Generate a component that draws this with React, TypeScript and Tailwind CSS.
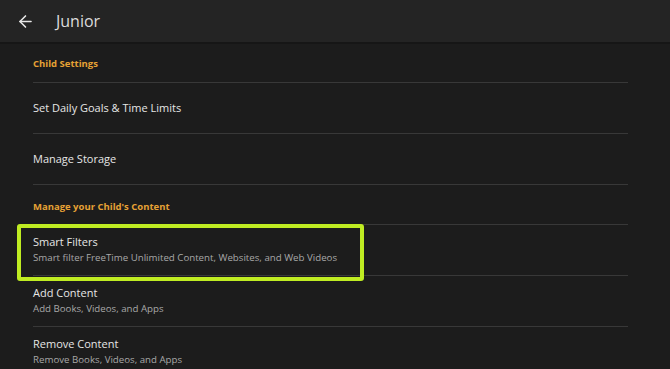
import { ArrowLeft } from 'lucide-react';

const font = { fontFamily: '"Open Sans", "Liberation Sans", sans-serif' };

const Divider = () => <div className="h-px bg-[#383838]" />;

const SectionHeader = ({ title, className }: { title: string; className: string }) => (
  <div className={`flex items-center text-[9.5px] font-bold text-[#e6a235] ${className}`}>{title}</div>
);

const Row = ({ title }: { title: string }) => (
  <div className="flex h-[50px] items-center text-[11px] text-[#e6e6e6]">{title}</div>
);

const SubRow = ({ title, sub }: { title: string; sub: string }) => (
  <div className="flex h-[50px] flex-col justify-center pb-[2px]">
    <div className="text-[11px] leading-[16px] text-[#e6e6e6]">{title}</div>
    <div className="text-[9.7px] leading-[15px] text-[#a8a8a8]">{sub}</div>
  </div>
);

export default function App() {
  return (
    <div className="h-[369px] w-[670px] overflow-hidden bg-[#1c1c1c]" style={font}>
      <header className="flex h-[44px] items-center border-b-2 border-[#161616] bg-[#242424]">
        <ArrowLeft className="ml-[16px] h-[19px] w-[19px] text-[#e8e8e8]" strokeWidth={2} />
        <span className="ml-[21px] text-[16px] text-[#dcdcdc]">Junior</span>
      </header>
      <div className="ml-[33px] mr-[42px]">
        <SectionHeader title="Child Settings" className="h-[38px] pt-[2px]" />
        <Divider />
        <Row title="Set Daily Goals & Time Limits" />
        <Divider />
        <Row title="Manage Storage" />
        <Divider />
        <SectionHeader title="Manage your Child's Content" className="h-[39px] pt-[5px]" />
        <Divider />
        <div className="relative">
          <SubRow title="Smart Filters" sub="Smart filter FreeTime Unlimited Content, Websites, and Web Videos" />
          <div className="absolute left-[-16px] top-[-1px] h-[57px] w-[347px] rounded-[3px] border-4 border-[#bfec22]" />
        </div>
        <Divider />
        <SubRow title="Add Content" sub="Add Books, Videos, and Apps" />
        <Divider />
        <SubRow title="Remove Content" sub="Remove Books, Videos, and Apps" />
      </div>
    </div>
  );
}
